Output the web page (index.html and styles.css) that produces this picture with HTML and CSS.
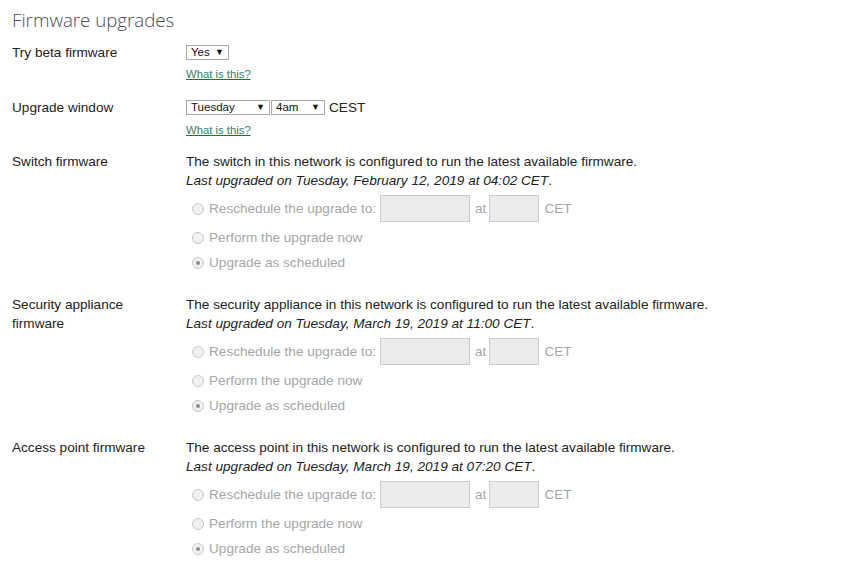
FILE: index.html
```html
<!DOCTYPE html>
<html>
<head>
<meta charset="utf-8">
<link rel="stylesheet" href="styles.css">
</head>
<body>
<div class="page">
  <h1 class="title">Firmware upgrades</h1>

  <div class="row row-top">
    <div class="label">Try beta firmware</div>
    <div class="content">
      <span class="sel sel-yes"><select><option>Yes</option></select></span>
      <div class="help"><a href="#">What is this?</a></div>
    </div>
  </div>

  <div class="row row-win">
    <div class="label">Upgrade window</div>
    <div class="content">
      <div class="selects">
        <span class="sel sel-day"><select><option>Tuesday</option></select></span><span class="sel sel-hour"><select><option>4am</option></select></span><span class="tz">CEST</span>
      </div>
      <div class="help"><a href="#">What is this?</a></div>
    </div>
  </div>

  <div class="row section">
    <div class="label">Switch firmware</div>
    <div class="content">
      <div class="desc">The switch in this network is configured to run the latest available firmware.</div>
      <div class="desc"><em>Last upgraded on Tuesday, February 12, 2019 at 04:02 CET</em>.</div>
      <div class="options">
        <label class="opt opt-re"><input type="radio" name="s1" disabled>Reschedule the upgrade to:<input class="txt txt-date" type="text" disabled><span class="at">at</span><input class="txt txt-time" type="text" disabled><span class="cet">CET</span></label>
        <label class="opt"><input type="radio" name="s1" disabled>Perform the upgrade now</label>
        <label class="opt"><input type="radio" name="s1" disabled checked>Upgrade as scheduled</label>
      </div>
    </div>
  </div>

  <div class="row section">
    <div class="label">Security appliance firmware</div>
    <div class="content">
      <div class="desc">The security appliance in this network is configured to run the latest available firmware.</div>
      <div class="desc"><em>Last upgraded on Tuesday, March 19, 2019 at 11:00 CET</em>.</div>
      <div class="options">
        <label class="opt opt-re"><input type="radio" name="s2" disabled>Reschedule the upgrade to:<input class="txt txt-date" type="text" disabled><span class="at">at</span><input class="txt txt-time" type="text" disabled><span class="cet">CET</span></label>
        <label class="opt"><input type="radio" name="s2" disabled>Perform the upgrade now</label>
        <label class="opt"><input type="radio" name="s2" disabled checked>Upgrade as scheduled</label>
      </div>
    </div>
  </div>

  <div class="row section">
    <div class="label">Access point firmware</div>
    <div class="content">
      <div class="desc">The access point in this network is configured to run the latest available firmware.</div>
      <div class="desc"><em>Last upgraded on Tuesday, March 19, 2019 at 07:20 CET</em>.</div>
      <div class="options">
        <label class="opt opt-re"><input type="radio" name="s3" disabled>Reschedule the upgrade to:<input class="txt txt-date" type="text" disabled><span class="at">at</span><input class="txt txt-time" type="text" disabled><span class="cet">CET</span></label>
        <label class="opt"><input type="radio" name="s3" disabled>Perform the upgrade now</label>
        <label class="opt"><input type="radio" name="s3" disabled checked>Upgrade as scheduled</label>
      </div>
    </div>
  </div>
</div>
</body>
</html>
```

FILE: styles.css
```css
html, body {
  margin: 0;
  padding: 0;
  background: #ffffff;
}
body {
  font-family: "Liberation Sans", Arial, sans-serif;
  font-size: 13.6px;
  color: #222222;
}
.page {
  padding: 8px 0 0 12px;
}
.title {
  margin: 0;
  font-family: "Open Sans", "Liberation Sans", sans-serif;
  font-weight: 300;
  font-size: 18.7px;
  line-height: 24px;
  color: #4a4a5e;
}
.row {
  display: grid;
  grid-template-columns: 174px 1fr;
  align-items: start;
}
.label {
  width: 150px;
  line-height: 18.5px;
}
.row-top {
  margin-top: 12px;
}
.row-win {
  margin-top: 18px;
}
.section {
  margin-top: 16px;
}
.section + .section {
  margin-top: 21px;
}
.sel {
  position: relative;
  display: inline-block;
  vertical-align: top;
  margin-top: 1px;
}
.sel select {
  -webkit-appearance: none;
  appearance: none;
  display: block;
  height: 15px;
  margin: 0;
  padding: 0 0 0 4px;
  border: 1px solid #a8a8a8;
  border-radius: 0;
  background: #ffffff;
  font-family: "Liberation Sans", Arial, sans-serif;
  font-size: 11.5px;
  line-height: 13px;
  color: #111111;
}
.sel::after {
  content: "\25BC";
  position: absolute;
  top: 3px;
  right: 5px;
  font-size: 9px;
  line-height: 9px;
  color: #111111;
  pointer-events: none;
}
.sel-yes select { width: 43px; }
.sel-day select { width: 84px; }
.sel-hour { margin-left: 1px; }
.sel-hour select { width: 54px; }
.selects {
  display: flex;
  align-items: flex-start;
}
.tz {
  margin-left: 4px;
  line-height: 17px;
}
.help {
  margin-top: 7px;
  font-size: 11.3px;
  line-height: 14px;
}
.help a {
  color: #367a6e;
  text-decoration: underline;
  text-decoration-color: #1d7a1d;
}
.desc {
  line-height: 18.5px;
}
.desc em {
  font-style: italic;
}
.options {
  margin-top: 5px;
  color: #a6a6a6;
}
.opt {
  display: flex;
  align-items: center;
  height: 25px;
}
.opt-re {
  height: 27px;
  margin-bottom: 3px;
}
.opt input[type="radio"] {
  -webkit-appearance: none;
  appearance: none;
  box-sizing: border-box;
  width: 12px;
  height: 12px;
  margin: 0 5px 0 6px;
  border: 1px solid #c9c9c9;
  border-radius: 50%;
  background: #f1f1f1;
  position: relative;
}
.opt input[type="radio"]:checked::after {
  content: "";
  position: absolute;
  left: 3px;
  top: 3px;
  width: 4px;
  height: 4px;
  border-radius: 50%;
  background: #8c8c8c;
}
.txt {
  box-sizing: border-box;
  height: 27px;
  margin: 0 0 0 4px;
  padding: 0;
  border: 1px solid #cccccc;
  background: #ebebeb;
}
.txt-date { width: 90px; }
.txt-time { width: 50px; margin-left: 3px; }
.at { margin-left: 5px; }
.cet { margin-left: 5px; }
```
